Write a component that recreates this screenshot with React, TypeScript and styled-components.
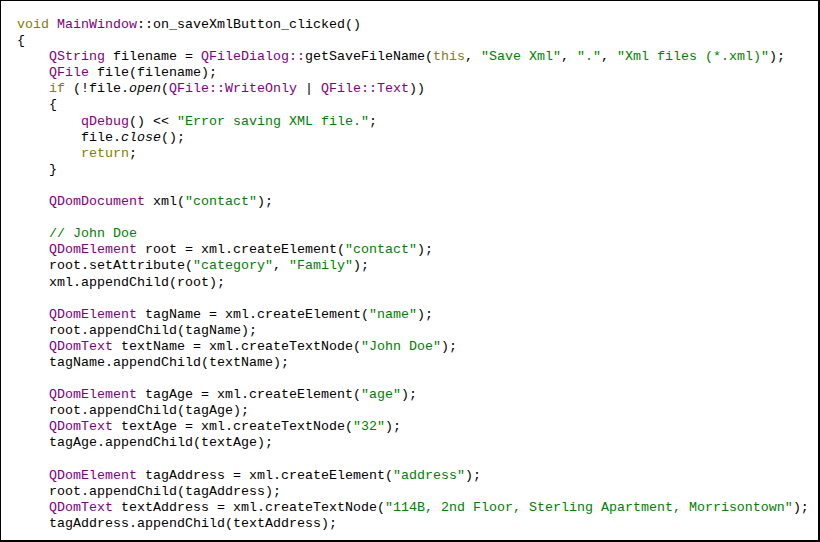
import React from "react";
import styled, { createGlobalStyle } from "styled-components";

const Global = createGlobalStyle`
  html, body { margin: 0; padding: 0; background: #ffffff; }
  #root { width: 820px; height: 542px; }
`;

const Frame = styled.div`
  box-sizing: border-box;
  width: 820px;
  height: 542px;
  background: #ffffff;
  border-style: solid;
  border-color: #000000;
  border-width: 1px 2px 2px 1px;
  padding: 16px 0 0 16px;
  overflow: hidden;
`;

const Code = styled.pre`
  margin: 0;
  font-family: "Liberation Mono", "Courier New", monospace;
  font-size: 13.333px;
  line-height: 16.1px;
  color: #000000;
  white-space: pre;
`;

const Line = styled.div`
  height: 16.1px;
`;

type Kind = "p" | "k" | "t" | "s" | "c" | "i";

const Tok = styled.span<{ $kind: Kind }>`
  color: ${({ $kind }) =>
    $kind === "k"
      ? "#808000"
      : $kind === "t"
      ? "#800080"
      : $kind === "s" || $kind === "c"
      ? "#008000"
      : "#000000"};
  font-style: ${({ $kind }) => ($kind === "i" ? "italic" : "normal")};
`;

type T = [Kind, string];

const I1 = "    ";
const I2 = "        ";

const lines: T[][] = [
  [["k", "void"], ["p", " "], ["t", "MainWindow"], ["p", "::on_saveXmlButton_clicked()"]],
  [["p", "{"]],
  [
    ["p", I1],
    ["t", "QString"],
    ["p", " filename = "],
    ["t", "QFileDialog::"],
    ["p", "getSaveFileName("],
    ["k", "this"],
    ["p", ", "],
    ["s", "\"Save Xml\""],
    ["p", ", "],
    ["s", "\".\""],
    ["p", ", "],
    ["s", "\"Xml files (*.xml)\""],
    ["p", ");"],
  ],
  [["p", I1], ["t", "QFile"], ["p", " file(filename);"]],
  [
    ["p", I1],
    ["k", "if"],
    ["p", " (!file."],
    ["i", "open"],
    ["p", "("],
    ["t", "QFile::WriteOnly"],
    ["p", " | "],
    ["t", "QFile::Text"],
    ["p", "))"],
  ],
  [["p", I1 + "{"]],
  [["p", I2], ["t", "qDebug"], ["p", "() << "], ["s", "\"Error saving XML file.\""], ["p", ";"]],
  [["p", I2 + "file."], ["i", "close"], ["p", "();"]],
  [["p", I2], ["k", "return"], ["p", ";"]],
  [["p", I1 + "}"]],
  [],
  [["p", I1], ["t", "QDomDocument"], ["p", " xml("], ["s", "\"contact\""], ["p", ");"]],
  [],
  [["p", I1], ["c", "// John Doe"]],
  [["p", I1], ["t", "QDomElement"], ["p", " root = xml.createElement("], ["s", "\"contact\""], ["p", ");"]],
  [["p", I1 + "root.setAttribute("], ["s", "\"category\""], ["p", ", "], ["s", "\"Family\""], ["p", ");"]],
  [["p", I1 + "xml.appendChild(root);"]],
  [],
  [["p", I1], ["t", "QDomElement"], ["p", " tagName = xml.createElement("], ["s", "\"name\""], ["p", ");"]],
  [["p", I1 + "root.appendChild(tagName);"]],
  [["p", I1], ["t", "QDomText"], ["p", " textName = xml.createTextNode("], ["s", "\"John Doe\""], ["p", ");"]],
  [["p", I1 + "tagName.appendChild(textName);"]],
  [],
  [["p", I1], ["t", "QDomElement"], ["p", " tagAge = xml.createElement("], ["s", "\"age\""], ["p", ");"]],
  [["p", I1 + "root.appendChild(tagAge);"]],
  [["p", I1], ["t", "QDomText"], ["p", " textAge = xml.createTextNode("], ["s", "\"32\""], ["p", ");"]],
  [["p", I1 + "tagAge.appendChild(textAge);"]],
  [],
  [["p", I1], ["t", "QDomElement"], ["p", " tagAddress = xml.createElement("], ["s", "\"address\""], ["p", ");"]],
  [["p", I1 + "root.appendChild(tagAddress);"]],
  [
    ["p", I1],
    ["t", "QDomText"],
    ["p", " textAddress = xml.createTextNode("],
    ["s", "\"114B, 2nd Floor, Sterling Apartment, Morrisontown\""],
    ["p", ");"],
  ],
  [["p", I1 + "tagAddress.appendChild(textAddress);"]],
];

export default function App() {
  return (
    <>
      <Global />
      <Frame>
        <Code>
          {lines.map((ln, i) => (
            <Line key={i}>
              {ln.map(([k, txt], j) => (
                <Tok key={j} $kind={k}>
                  {txt}
                </Tok>
              ))}
            </Line>
          ))}
        </Code>
      </Frame>
    </>
  );
}
